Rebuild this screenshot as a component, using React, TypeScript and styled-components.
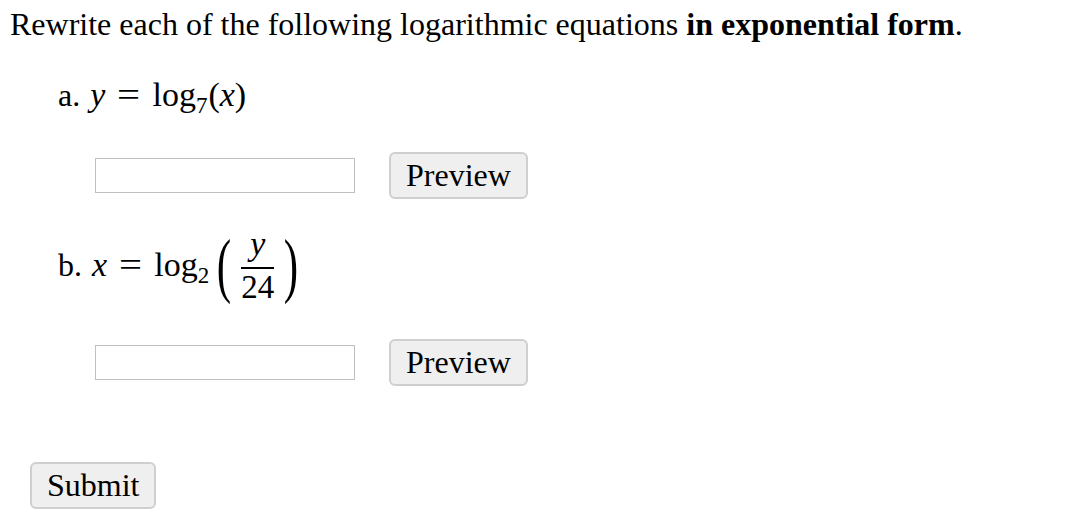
import React from 'react';
import styled, { createGlobalStyle } from 'styled-components';

const GlobalStyle = createGlobalStyle`
  html, body {
    margin: 0;
    padding: 0;
    background: #fff;
  }
  body {
    font-family: "Liberation Serif", "Times New Roman", serif;
    color: #000;
  }
`;

const Page = styled.div`
  padding: 6px 10px 0 10px;
  font-size: 32px;
`;

const Prompt = styled.div`
  line-height: 36px;
  margin: 0;
  white-space: nowrap;
`;

const Part = styled.div`
  padding-left: 48px;
`;

const Equation = styled.div<{ $top: number; $height: number }>`
  display: flex;
  align-items: center;
  margin-top: ${(p) => p.$top}px;
  height: ${(p) => p.$height}px;
  font-size: 32px;
`;

const Label = styled.span`
  margin-right: 10px;
`;

const Math = styled.span`
  display: inline-flex;
  align-items: center;
  font-size: 34px;
`;

const Var = styled.i`
  font-style: italic;
`;

const Op = styled.span`
  display: inline-block;
  margin: 0 14px;
  transform: scaleX(1.2);
`;

const Sub = styled.sub`
  font-size: 23px;
  vertical-align: -7px;
  line-height: 0;
`;

const LogFn = styled.span<{ $gap: number }>`
  margin-right: ${(p) => p.$gap}px;
`;

const Frac = styled.span`
  display: inline-flex;
  flex-direction: column;
  align-items: center;
  font-size: 33px;
  line-height: 28px;
  margin: 0 3px;
`;

const Num = styled.span`
  display: block;
  font-size: 34px;
  line-height: 28px;
  padding: 0 9px 9px;
  border-bottom: 2px solid #000;
`;

const Den = styled.span`
  display: block;
  padding: 4px 5px 0;
`;

const BigParen = styled.span`
  font-size: 72px;
  line-height: 72px;
  transform: scaleX(0.6);
  display: inline-block;
  margin: 0 -3px;
`;

const AnswerRow = styled.div<{ $top: number }>`
  display: flex;
  align-items: center;
  gap: 34px;
  padding-left: 85px;
  margin-top: ${(p) => p.$top}px;
`;

const AnswerInput = styled.input`
  width: 260px;
  height: 35px;
  box-sizing: border-box;
  border: 1px solid #c0c0c0;
  padding: 0 4px;
  font-family: "Liberation Serif", serif;
  font-size: 24px;
  margin: 0;
`;

const GrayButton = styled.button`
  font-family: "Liberation Serif", "Times New Roman", serif;
  font-size: 32px;
  color: #000;
  background: #efefef;
  border: 2px solid #cfcfcf;
  border-radius: 6px;
  padding: 0 15px;
  height: 47px;
  box-sizing: border-box;
  margin: 0;
  cursor: pointer;
`;

const SubmitRow = styled.div`
  margin-top: 76px;
  padding-left: 20px;
`;

export default function App() {
  return (
    <>
      <GlobalStyle />
      <Page>
        <Prompt>
          Rewrite each of the following logarithmic equations <b>in exponential form</b>.
        </Prompt>
        <Part>
          <Equation $top={33} $height={40}>
            <Label>a.</Label>
            <Math>
              <Var>y</Var>
              <Op>=</Op>
              <LogFn $gap={1}>
                log<Sub>7</Sub>
              </LogFn>
              <span>(</span>
              <Var>x</Var>
              <span>)</span>
            </Math>
          </Equation>
        </Part>
        <AnswerRow $top={37}>
          <AnswerInput type="text" />
          <GrayButton>Preview</GrayButton>
        </AnswerRow>
        <Part>
          <Equation $top={31} $height={70}>
            <Label>b.</Label>
            <Math>
              <Var>x</Var>
              <Op>=</Op>
              <LogFn $gap={6}>
                log<Sub>2</Sub>
              </LogFn>
              <BigParen>(</BigParen>
              <Frac>
                <Num>
                  <Var>y</Var>
                </Num>
                <Den>24</Den>
              </Frac>
              <BigParen>)</BigParen>
            </Math>
          </Equation>
        </Part>
        <AnswerRow $top={39}>
          <AnswerInput type="text" />
          <GrayButton>Preview</GrayButton>
        </AnswerRow>
        <SubmitRow>
          <GrayButton>Submit</GrayButton>
        </SubmitRow>
      </Page>
    </>
  );
}
